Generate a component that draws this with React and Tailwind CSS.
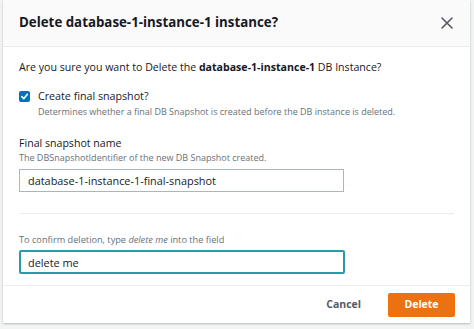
import React, { useState } from 'react';

function CloseIcon() {
    return (
        <svg width="14" height="14" viewBox="0 0 14 14" fill="none" stroke="#545b64" strokeWidth="1.6" strokeLinecap="round">
            <path d="M2 2 L12 12 M12 2 L2 12" />
        </svg>
    );
}

function Checkbox({ checked, onChange }) {
    return (
        <button
            type="button"
            onClick={onChange}
            className={`w-[11px] h-[11px] rounded-[2px] flex items-center justify-center shrink-0 ${checked ? 'bg-[#0073bb]' : 'border border-[#aab7b8] bg-white'}`}
        >
            {checked && (
                <svg width="9" height="9" viewBox="0 0 10 10" fill="none" stroke="white" strokeWidth="1.8" strokeLinecap="round" strokeLinejoin="round">
                    <path d="M2 5.2 L4.2 7.4 L8.2 2.6" />
                </svg>
            )}
        </button>
    );
}

export default function App() {
    const [snapshot, setSnapshot] = useState(true);
    const [snapshotName, setSnapshotName] = useState('database-1-instance-1-final-snapshot');
    const [confirm, setConfirm] = useState('delete me');

    return (
        <div className="w-[474px] h-[329px] bg-[#f2f3f3] pl-[3px] pr-[4px] font-['Open_Sans',sans-serif] text-[#16191f]">
            <div className="h-[323px] bg-white shadow-[0_1px_2px_rgba(0,0,0,0.25)] flex flex-col">
                {/* Header */}
                <div className="h-[47px] bg-[#fafafa] border-b border-[#eaeded] pl-[16px] pr-[15px] flex items-center justify-between shrink-0">
                    <h2 className="text-[13.3px] font-bold">Delete database-1-instance-1 instance?</h2>
                    <button type="button" className="w-[16px] h-[16px] flex items-center justify-center">
                        <CloseIcon />
                    </button>
                </div>

                {/* Body */}
                <div className="px-[16px] pt-[11px] flex-1">
                    <p className="text-[10.6px] leading-[18px]">
                        Are you sure you want to Delete the <b>database-1-instance-1</b> DB Instance?
                    </p>

                    <div className="mt-[12px] flex gap-[8px]">
                        <div className="pt-[3px]">
                            <Checkbox checked={snapshot} onChange={() => setSnapshot(!snapshot)} />
                        </div>
                        <div>
                            <div className="text-[10.7px] leading-[17px]">Create final snapshot?</div>
                            <div className="text-[9px] leading-[13px] text-[#687078]">Determines whether a final DB Snapshot is created before the DB instance is deleted.</div>
                        </div>
                    </div>

                    <div className="mt-[17px]">
                        <div className="text-[10.6px] leading-[16px]">Final snapshot name</div>
                        <div className="text-[9px] leading-[13px] text-[#687078]">The DBSnapshotIdentifier of the new DB Snapshot created.</div>
                        <input
                            value={snapshotName}
                            onChange={(e) => setSnapshotName(e.target.value)}
                            className="mt-[5px] block w-[325px] h-[23px] border border-[#aab7b8] px-[8px] text-[10.9px] outline-none"
                        />
                    </div>

                    <div className="mt-[21px] border-t border-[#eaeded]" />

                    <div className="mt-[19px]">
                        <div className="text-[9.2px] leading-[13px] text-[#687078]">
                            To confirm deletion, type <i>delete me</i> into the field
                        </div>
                        <input
                            autoFocus
                            value={confirm}
                            onChange={(e) => setConfirm(e.target.value)}
                            className="mt-[4px] block w-[326px] h-[24px] border-2 border-[#2a9aa8] rounded-[2px] px-[7px] text-[10.9px] outline-none caret-[#16191f]"
                        />
                    </div>
                </div>

                {/* Footer */}
                <div className="h-[38px] border-t border-[#eaeded] pr-[15px] flex items-center justify-end gap-[27px] shrink-0">
                    <button type="button" className="text-[10.5px] font-bold text-[#545b64]">Cancel</button>
                    <button type="button" className="w-[67px] h-[24px] rounded-[2px] bg-[#ec7211] text-white text-[10.5px] font-bold">Delete</button>
                </div>
            </div>
        </div>
    );
}
